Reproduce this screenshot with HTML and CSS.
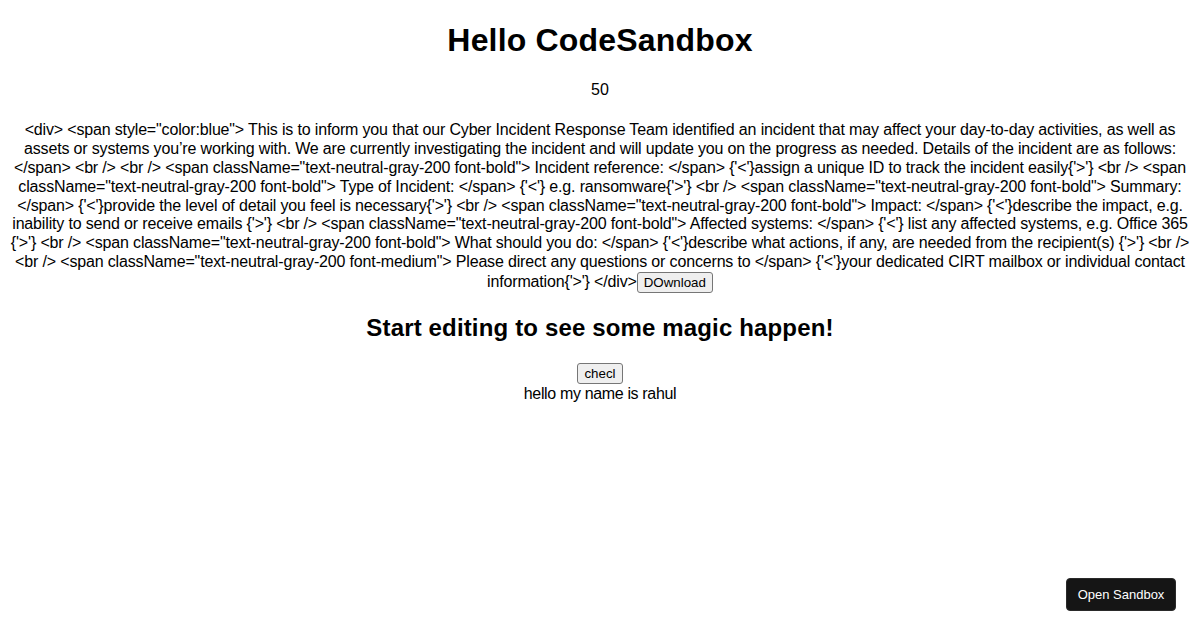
FILE: index.html
```html
<!DOCTYPE html>
<html>
<head>
<meta charset="utf-8">
<link rel="stylesheet" href="styles.css">
</head>
<body>
<div class="app">
  <h1 class="title">Hello CodeSandbox</h1>
  <div class="count">50</div>
  <div class="message">&lt;div&gt; &lt;span style="color:blue"&gt; This is to inform you that our Cyber Incident Response Team identified an incident that may affect your day-to-day activities, as well as assets or systems you’re working with. We are currently investigating the incident and will update you on the progress as needed. Details of the incident are as follows: &lt;/span&gt; &lt;br /&gt; &lt;br /&gt; &lt;span className="text-neutral-gray-200 font-bold"&gt; Incident reference: &lt;/span&gt; {'&lt;'}assign a unique ID to track the incident easily{'&gt;'} &lt;br /&gt; &lt;span className="text-neutral-gray-200 font-bold"&gt; Type of Incident: &lt;/span&gt; {'&lt;'} e.g. ransomware{'&gt;'} &lt;br /&gt; &lt;span className="text-neutral-gray-200 font-bold"&gt; Summary: &lt;/span&gt; {'&lt;'}provide the level of detail you feel is necessary{'&gt;'} &lt;br /&gt; &lt;span className="text-neutral-gray-200 font-bold"&gt; Impact: &lt;/span&gt; {'&lt;'}describe the impact, e.g. inability to send or receive emails {'&gt;'} &lt;br /&gt; &lt;span className="text-neutral-gray-200 font-bold"&gt; Affected systems: &lt;/span&gt; {'&lt;'} list any affected systems, e.g. Office 365 {'&gt;'} &lt;br /&gt; &lt;span className="text-neutral-gray-200 font-bold"&gt; What should you do: &lt;/span&gt; {'&lt;'}describe what actions, if any, are needed from the recipient(s) {'&gt;'} &lt;br /&gt; &lt;br /&gt; &lt;span className="text-neutral-gray-200 font-medium"&gt; Please direct any questions or concerns to &lt;/span&gt; {'&lt;'}your dedicated CIRT mailbox or individual contact information{'&gt;'} &lt;/div&gt;<button class="btn">DOwnload</button></div>
  <h2 class="subtitle">Start editing to see some magic happen!</h2>
  <button class="btn">checl</button>
  <div class="name">hello my name is rahul</div>
</div>
<a class="open-sandbox">Open Sandbox</a>
</body>
</html>
```

FILE: styles.css
```css
html, body {
  margin: 0;
  padding: 0;
}
body {
  padding: 0 8px;
  background: #fff;
  color: #000;
}
.app {
  font-family: "Liberation Sans", Arial, sans-serif;
  text-align: center;
  padding-top: 1px;
}
.title {
  font-size: 32px;
  line-height: 37px;
  font-weight: bold;
  letter-spacing: 0.18px;
  margin: 20.5px 0 21.44px;
}
.count {
  font-size: 16px;
  line-height: 19px;
  margin: 0;
}
.message {
  font-size: 16px;
  line-height: 18.9px;
  letter-spacing: -0.16px;
  margin-top: 22px;
}
.subtitle {
  font-size: 24px;
  line-height: 28px;
  font-weight: bold;
  letter-spacing: 0.15px;
  margin: 21px 0 21px;
}
.btn {
  font-family: "Liberation Sans", Arial, sans-serif;
  font-size: 13.333px;
  line-height: 15px;
  padding: 2px 6px;
  background: #efefef;
  border: 1px solid #767676;
  border-radius: 3px;
  color: #000;
  letter-spacing: 0;
}
.name {
  font-size: 16px;
  line-height: 19px;
  letter-spacing: -0.35px;
}
.open-sandbox {
  position: fixed;
  right: 24px;
  bottom: 19px;
  width: 110px;
  height: 33px;
  box-sizing: border-box;
  display: flex;
  align-items: center;
  justify-content: center;
  background: #151515;
  color: #fff;
  border-radius: 4px;
  font-family: "Liberation Sans", Arial, sans-serif;
  font-size: 13px;
  border: 1px solid #2a2a2a;
}
```
